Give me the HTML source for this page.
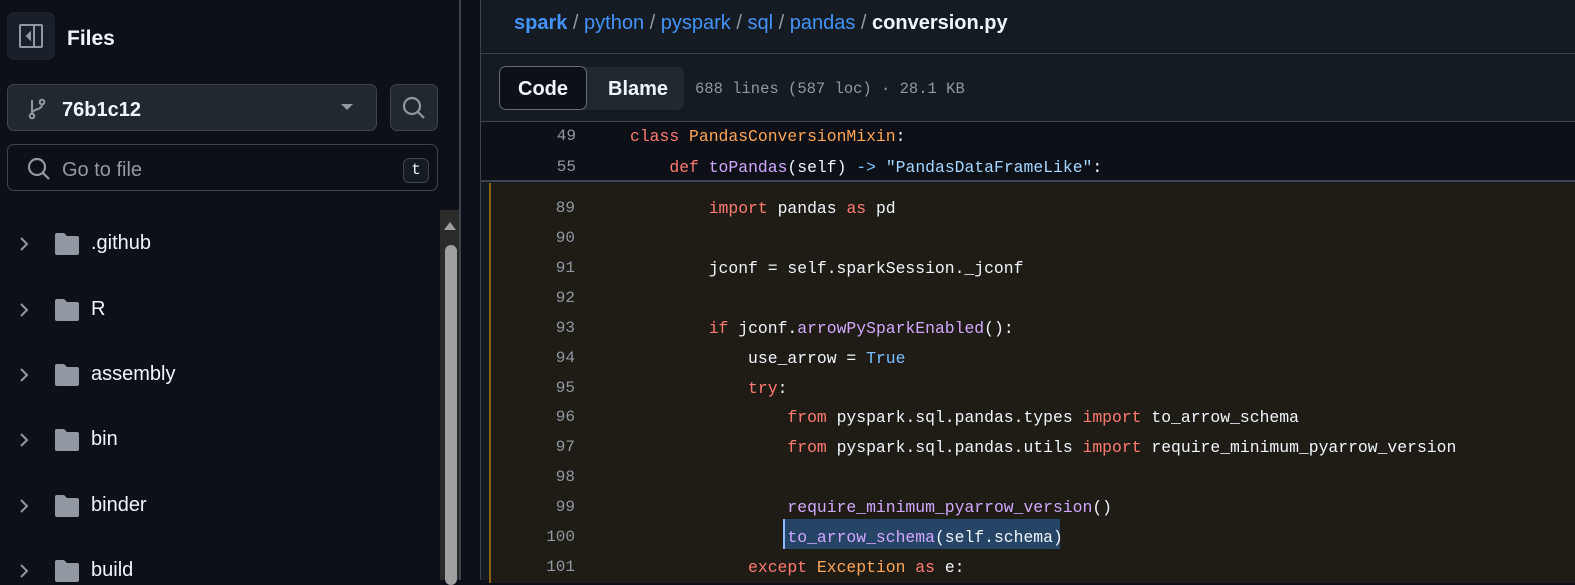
<!DOCTYPE html>
<html><head><meta charset="utf-8"><style>
*{box-sizing:border-box;margin:0;padding:0}
body{width:1575px;height:580px;overflow:hidden;background:#0d1117;font-family:"Liberation Sans",sans-serif;color:#f0f6fc;position:relative}
.abs{position:absolute}
#side{left:0;top:0;width:461px;height:580px;background:#0d1117;border-right:2px solid #3d444d}
.btn{border:1px solid #3d444d;border-radius:7px;background:#212830}
.row{position:absolute;left:0;height:30px;font-size:20px;color:#f0f6fc}
.row .chev{position:absolute;left:18px;top:7px}
.row .fold{position:absolute;left:55px;top:5px}
.row span{position:absolute;left:91px;top:4px}
#main{left:480px;top:0;width:1095px;height:580px;background:#151b23;border-left:1px solid #3d444d}
.mono{font-family:"Liberation Mono",monospace}
.ln{position:absolute;width:90px;text-align:right;color:#9198a1;font-size:16px}
.cd{position:absolute;font-size:16.4px;white-space:pre;color:#f0f6fc}
.k{color:#ff7b72}.f{color:#d2a8ff}.c{color:#ffa657}.s{color:#a5d6ff}.b{color:#79c0ff}
</style></head><body>
<div id="side" class="abs">
  <div class="abs" style="left:7px;top:12px;width:48px;height:48px;border-radius:7px;background:#1a2029"></div>
  <svg class="abs" style="left:19px;top:24px" width="24" height="24" viewBox="0 0 24 24" fill="none" stroke="#9198a1" stroke-width="2"><rect x="1" y="1" width="22" height="22" rx="1"/><line x1="15" y1="1" x2="15" y2="23"/><path d="M11 9l-3 3 3 3z" fill="#9198a1"/></svg>
  <div class="abs" style="left:67px;top:27px;font-size:21px;font-weight:bold">Files</div>
  <div class="abs btn" style="left:7px;top:84px;width:370px;height:47px"></div>
  <svg class="abs" style="left:28px;top:98px" width="18" height="22" viewBox="0 0 18 22" fill="none" stroke="#9198a1" stroke-width="2"><circle cx="4" cy="18" r="2.3"/><circle cx="14" cy="4" r="2.3"/><line x1="4" y1="2" x2="4" y2="15.5"/><path d="M14 6.5c0 6-10 4-10 9"/></svg>
  <div class="abs" style="left:62px;top:99px;font-size:20px;font-weight:bold">76b1c12</div>
  <svg class="abs" style="left:341px;top:104px" width="12" height="7"><path d="M0 0h12L6 6z" fill="#9198a1"/></svg>
  <div class="abs btn" style="left:390px;top:84px;width:48px;height:47px"></div>
  <svg class="abs" style="left:402px;top:96px" width="24" height="24" viewBox="0 0 24 24" fill="none" stroke="#9198a1" stroke-width="2.2"><circle cx="10" cy="10" r="8"/><line x1="16" y1="16" x2="22" y2="22"/></svg>
  <div class="abs" style="left:7px;top:144px;width:431px;height:47px;border:1px solid #3d444d;border-radius:7px;background:#0d1117"></div>
  <svg class="abs" style="left:27px;top:157px" width="24" height="24" viewBox="0 0 24 24" fill="none" stroke="#9198a1" stroke-width="2.2"><circle cx="10" cy="10" r="8"/><line x1="16" y1="16" x2="22" y2="22"/></svg>
  <div class="abs" style="left:62px;top:159px;font-size:20px;color:#9198a1">Go to file</div>
  <div class="abs mono" style="left:403px;top:158px;width:26px;height:25px;border:1px solid #3d444d;border-radius:6px;background:#151b23;font-size:16px;text-align:center;line-height:22px;color:#f0f6fc">t</div>
  <div class="abs" style="left:440px;top:210px;width:19px;height:370px;background:#2b2b2b"></div>
  <svg class="abs" style="left:443px;top:221px" width="14" height="10"><path d="M1 9L7 1l6 8z" fill="#a0a0a0"/></svg>
  <div class="abs" style="left:445px;top:245px;width:12px;height:340px;border-radius:6px;background:#a0a0a0"></div>
  <div class="row" style="top:228px"><svg class="chev" width="12" height="18"><path d="M3 3l6 6-6 6" stroke="#9198a1" stroke-width="2" fill="none"/></svg><svg class="fold" width="24" height="22"><path d="M0 2q0-2 2-2h7l3 3h10q2 0 2 2v15q0 2-2 2H2q-2 0-2-2z" fill="#9198a1"/></svg><span>.github</span></div>
  <div class="row" style="top:294px"><svg class="chev" width="12" height="18"><path d="M3 3l6 6-6 6" stroke="#9198a1" stroke-width="2" fill="none"/></svg><svg class="fold" width="24" height="22"><path d="M0 2q0-2 2-2h7l3 3h10q2 0 2 2v15q0 2-2 2H2q-2 0-2-2z" fill="#9198a1"/></svg><span>R</span></div>
  <div class="row" style="top:359px"><svg class="chev" width="12" height="18"><path d="M3 3l6 6-6 6" stroke="#9198a1" stroke-width="2" fill="none"/></svg><svg class="fold" width="24" height="22"><path d="M0 2q0-2 2-2h7l3 3h10q2 0 2 2v15q0 2-2 2H2q-2 0-2-2z" fill="#9198a1"/></svg><span>assembly</span></div>
  <div class="row" style="top:424px"><svg class="chev" width="12" height="18"><path d="M3 3l6 6-6 6" stroke="#9198a1" stroke-width="2" fill="none"/></svg><svg class="fold" width="24" height="22"><path d="M0 2q0-2 2-2h7l3 3h10q2 0 2 2v15q0 2-2 2H2q-2 0-2-2z" fill="#9198a1"/></svg><span>bin</span></div>
  <div class="row" style="top:490px"><svg class="chev" width="12" height="18"><path d="M3 3l6 6-6 6" stroke="#9198a1" stroke-width="2" fill="none"/></svg><svg class="fold" width="24" height="22"><path d="M0 2q0-2 2-2h7l3 3h10q2 0 2 2v15q0 2-2 2H2q-2 0-2-2z" fill="#9198a1"/></svg><span>binder</span></div>
  <div class="row" style="top:555px"><svg class="chev" width="12" height="18"><path d="M3 3l6 6-6 6" stroke="#9198a1" stroke-width="2" fill="none"/></svg><svg class="fold" width="24" height="22"><path d="M0 2q0-2 2-2h7l3 3h10q2 0 2 2v15q0 2-2 2H2q-2 0-2-2z" fill="#9198a1"/></svg><span>build</span></div>
</div>
<div id="main" class="abs">
  <div class="abs" style="left:33px;top:12px;font-size:20px;color:#9198a1;white-space:pre"><span style="color:#4493f8;font-weight:bold">spark</span> / <span style="color:#4493f8">python</span> / <span style="color:#4493f8">pyspark</span> / <span style="color:#4493f8">sql</span> / <span style="color:#4493f8">pandas</span> / <b style="color:#f0f6fc">conversion.py</b></div>
  <div class="abs" style="left:0;top:53px;width:1095px;height:1px;background:#3d444d"></div>
  <div class="abs" style="left:18px;top:67px;width:185px;height:43px;border-radius:7px;background:#212830"></div>
  <div class="abs" style="left:18px;top:66px;width:88px;height:44px;border-radius:7px;background:#0d1117;border:1px solid #656c76"></div>
  <div class="abs" style="left:37px;top:78px;font-size:20px;font-weight:bold">Code</div>
  <div class="abs" style="left:127px;top:78px;font-size:20px;font-weight:bold">Blame</div>
  <div class="abs mono" style="left:214px;top:80px;font-size:15.5px;color:#9198a1">688 lines (587 loc) · 28.1 KB</div>
  <div class="abs" style="left:0;top:121px;width:1095px;height:61px;background:#0d1117;border-top:1px solid #3d444d;border-bottom:2px solid #3d444d"></div>
  <div class="abs" style="left:8px;top:183px;width:1087px;height:400px;background:#1f1c16;border-left:2px solid #8a6414"></div>
  <div class="mono">
  <div class="ln" style="left:5px;top:127px">49</div><div class="cd" style="left:149px;top:127px"><span class="k">class</span> <span class="c">PandasConversionMixin</span>:</div>
  <div class="ln" style="left:5px;top:158px">55</div><div class="cd" style="left:149px;top:158px">    <span class="k">def</span> <span class="f">toPandas</span>(self) <span class="b">-&gt;</span> <span class="s">"PandasDataFrameLike"</span>:</div>
  <div class="ln" style="left:4px;top:199px">89</div><div class="cd" style="left:149px;top:199px">        <span class="k">import</span> pandas <span class="k">as</span> pd</div>
  <div class="ln" style="left:4px;top:229px">90</div>
  <div class="ln" style="left:4px;top:259px">91</div><div class="cd" style="left:149px;top:259px">        jconf = self.sparkSession._jconf</div>
  <div class="ln" style="left:4px;top:289px">92</div>
  <div class="ln" style="left:4px;top:319px">93</div><div class="cd" style="left:149px;top:319px">        <span class="k">if</span> jconf.<span class="f">arrowPySparkEnabled</span>():</div>
  <div class="ln" style="left:4px;top:349px">94</div><div class="cd" style="left:149px;top:349px">            use_arrow = <span class="b">True</span></div>
  <div class="ln" style="left:4px;top:379px">95</div><div class="cd" style="left:149px;top:379px">            <span class="k">try</span>:</div>
  <div class="ln" style="left:4px;top:408px">96</div><div class="cd" style="left:149px;top:408px">                <span class="k">from</span> pyspark.sql.pandas.types <span class="k">import</span> to_arrow_schema</div>
  <div class="ln" style="left:4px;top:438px">97</div><div class="cd" style="left:149px;top:438px">                <span class="k">from</span> pyspark.sql.pandas.utils <span class="k">import</span> require_minimum_pyarrow_version</div>
  <div class="ln" style="left:4px;top:468px">98</div>
  <div class="ln" style="left:4px;top:498px">99</div><div class="cd" style="left:149px;top:498px">                <span class="f">require_minimum_pyarrow_version</span>()</div>
  <div class="abs" style="left:302px;top:519px;width:277px;height:30px;background:#264466"></div>
  <div class="abs" style="left:302px;top:519px;width:2px;height:30px;background:#8fb8ff"></div>
  <div class="ln" style="left:4px;top:528px">100</div><div class="cd" style="left:149px;top:528px">                <span class="f">to_arrow_schema</span>(self.schema)</div>
  <div class="ln" style="left:4px;top:558px">101</div><div class="cd" style="left:149px;top:558px">            <span class="k">except</span> <span class="c">Exception</span> <span class="k">as</span> e:</div>
  </div>
</div>
</body></html>
